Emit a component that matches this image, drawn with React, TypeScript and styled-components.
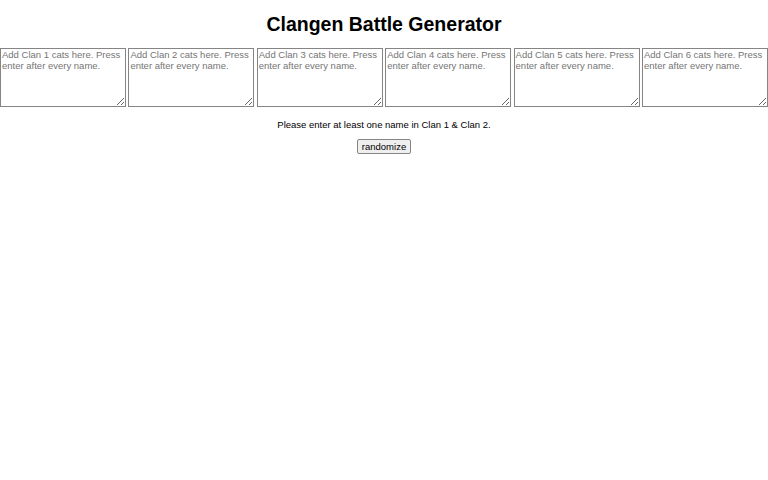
import React from "react";
import styled, { createGlobalStyle } from "styled-components";

const Global = createGlobalStyle`
  html, body { margin: 0; padding: 0; background: #fff; }
  body { font-family: "Liberation Sans", Arial, sans-serif; color: #000; }
`;

const Page = styled.div`
  display: flex;
  flex-direction: column;
  align-items: center;
`;

const Title = styled.h1`
  font-size: 19.5px;
  font-weight: bold;
  margin: 13px 0 12px;
  line-height: 23px;
`;

const Clans = styled.div`
  display: flex;
  justify-content: space-between;
  width: 100%;
`;

const ClanBox = styled.textarea`
  width: 126px;
  height: 59px;
  box-sizing: border-box;
  margin: 0;
  padding: 0 1px 1px;
  font-family: "Liberation Sans", Arial, sans-serif;
  font-size: 9.5px;
  line-height: 11px;
  border: 1px solid #858585;
  &::placeholder { color: #757575; }
`;

const Notice = styled.p`
  font-size: 9.5px;
  margin: 12px 0 9px;
  line-height: 11px;
`;

const Button = styled.button`
  font-family: "Liberation Sans", Arial, sans-serif;
  font-size: 9.5px;
  line-height: 11px;
  padding: 1px 4px;
  height: 15px;
  box-sizing: border-box;
  background: #efefef;
  border: 1px solid #858585;
  border-radius: 2px;
  color: #000;
`;

export default function App() {
  const clans = [1, 2, 3, 4, 5, 6];
  return (
    <Page>
      <Global />
      <Title>Clangen Battle Generator</Title>
      <Clans>
        {clans.map((n) => (
          <ClanBox key={n} placeholder={`Add Clan ${n} cats here. Press enter after every name.`} />
        ))}
      </Clans>
      <Notice>Please enter at least one name in Clan 1 &amp; Clan 2.</Notice>
      <Button>randomize</Button>
    </Page>
  );
}
